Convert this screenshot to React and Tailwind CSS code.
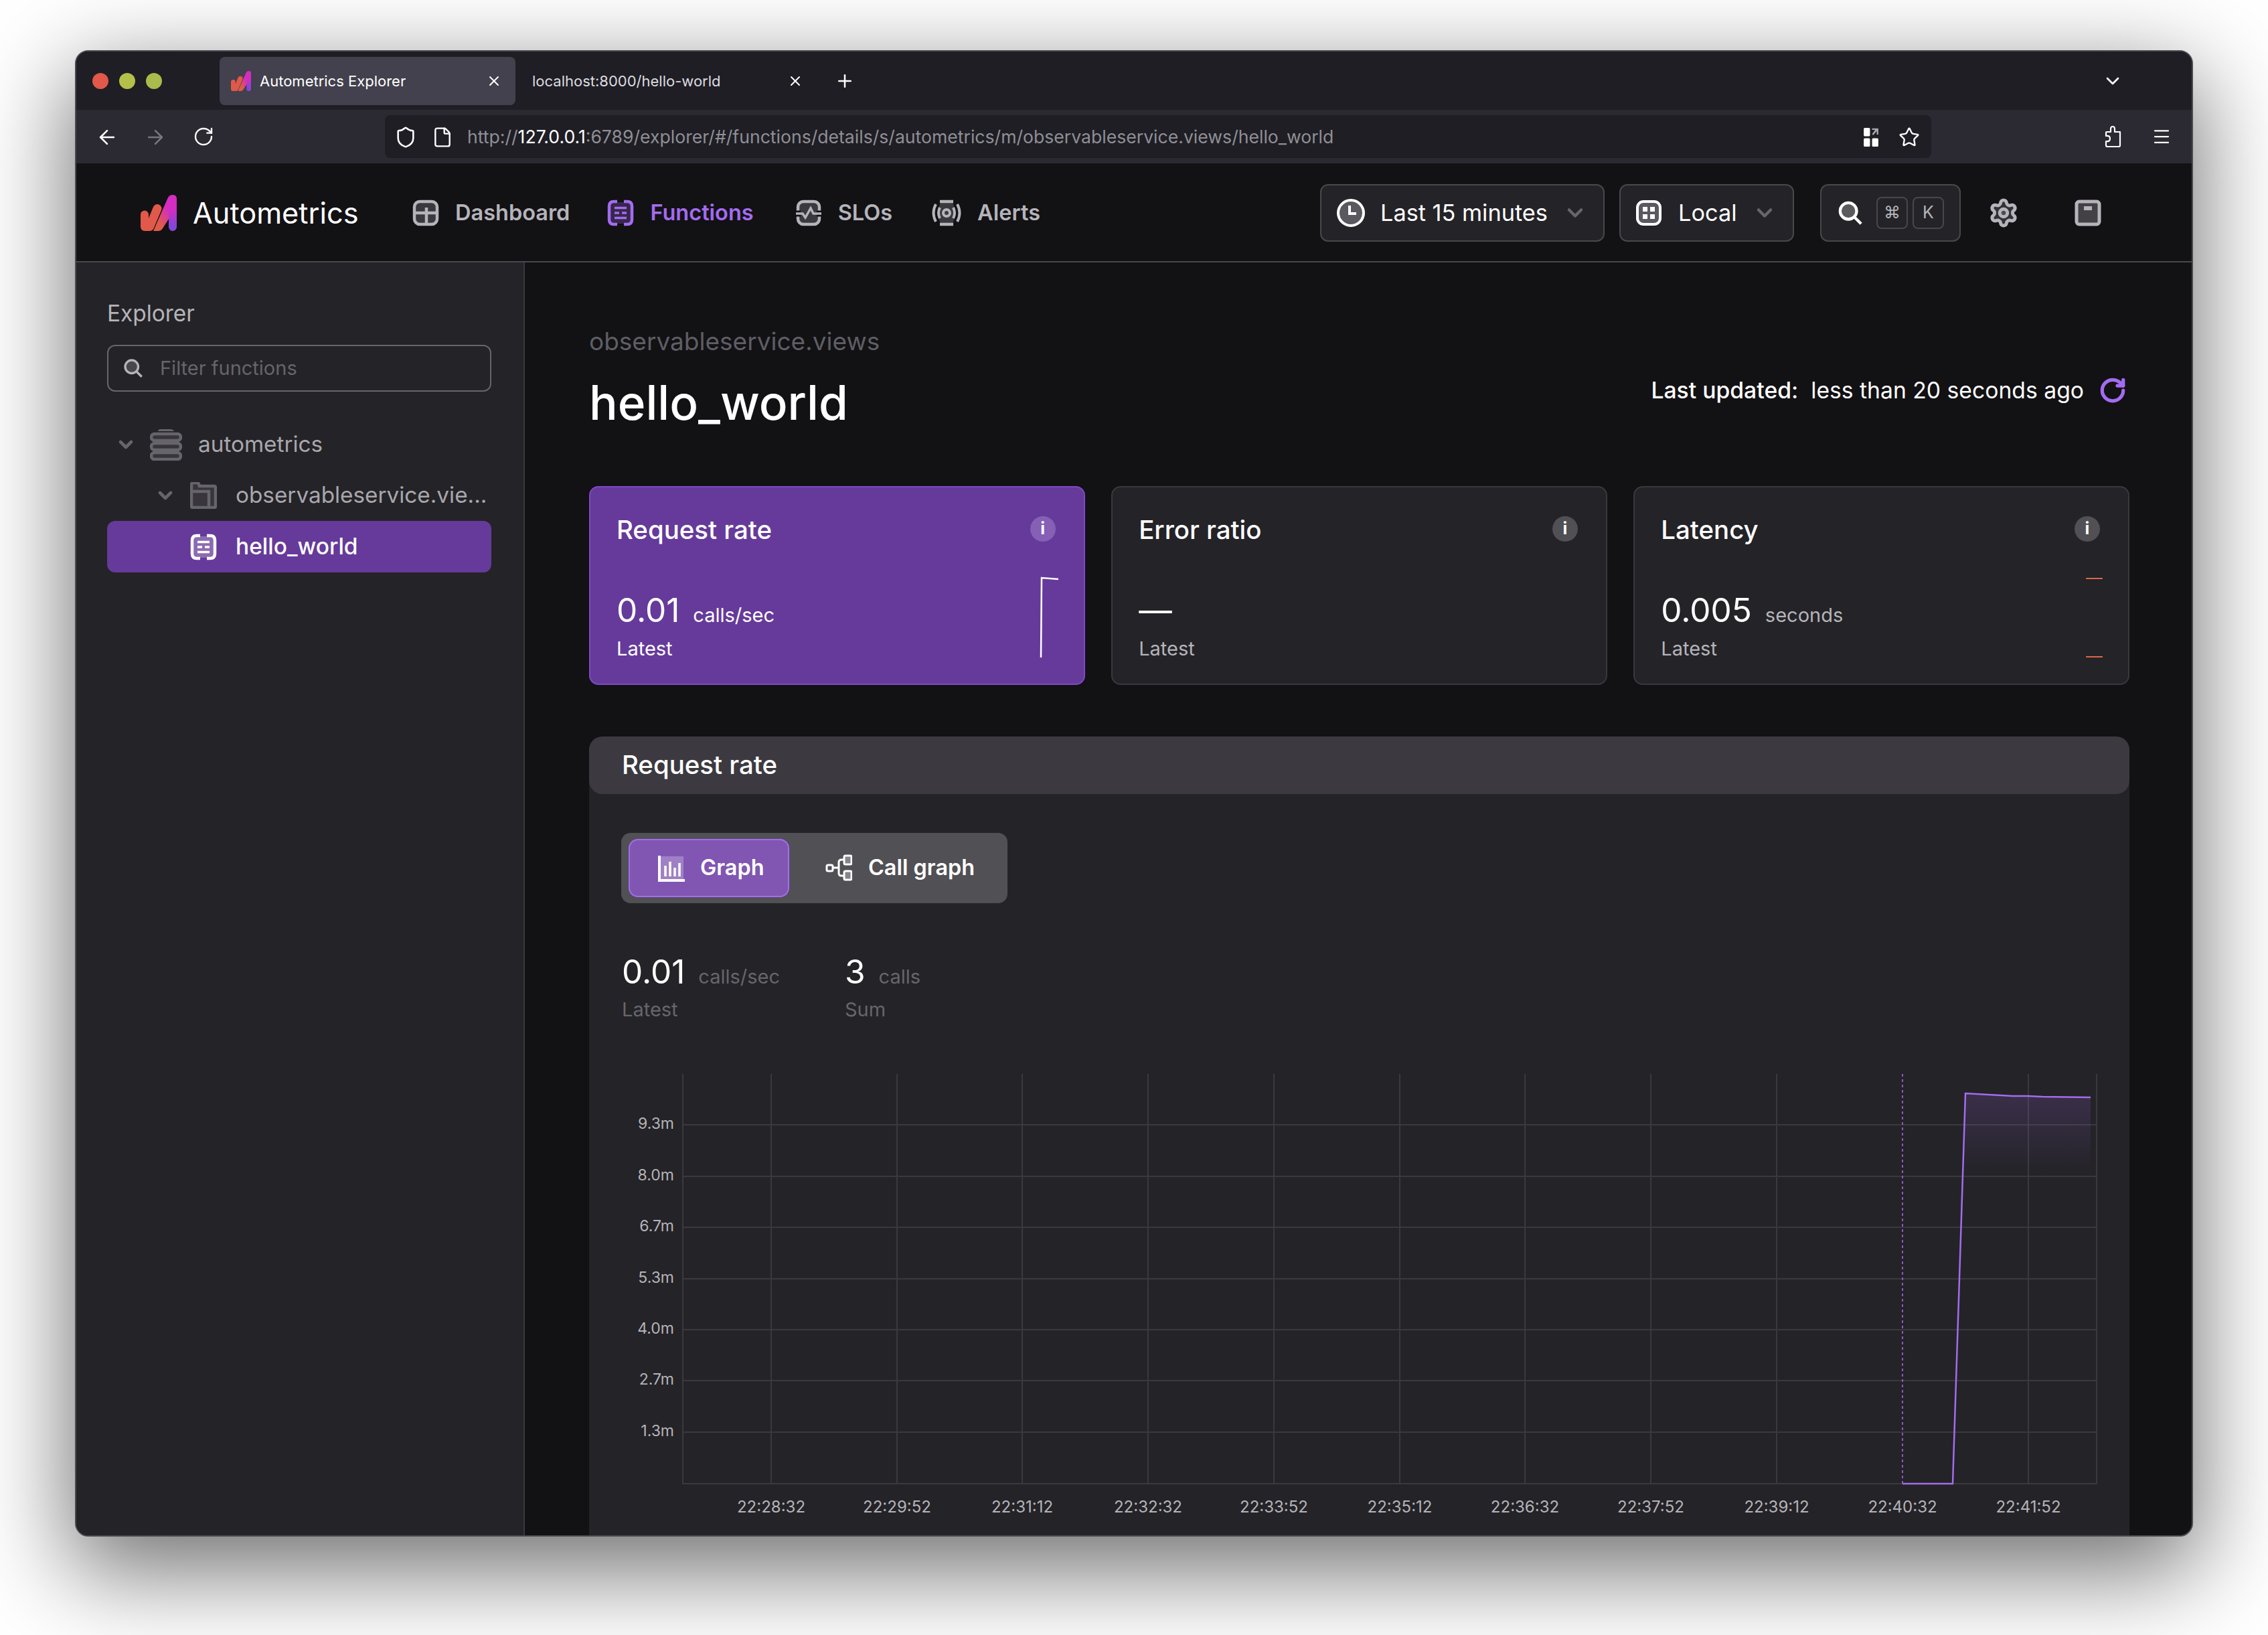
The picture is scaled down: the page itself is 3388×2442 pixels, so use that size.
import { ArrowLeft, ArrowRight, ChevronDown, File, Menu, Plus, RotateCw, Settings, Shield, Star, X } from "lucide-react"

const xLabels = ["22:28:32", "22:29:52", "22:31:12", "22:32:32", "22:33:52", "22:35:12", "22:36:32", "22:37:52", "22:39:12", "22:40:32", "22:41:52"]
const xLines = [1152, 1340, 1527, 1715, 1903, 2091, 2278, 2466, 2654, 2842, 3030]
const yLabels = [
  ["9.3m", 1680],
  ["8.0m", 1757],
  ["6.7m", 1833],
  ["5.3m", 1910],
  ["4.0m", 1986],
  ["2.7m", 2062],
  ["1.3m", 2139],
]

function Logo({ className }) {
  return (
    <svg viewBox="0 0 54 54" className={className}>
      <defs>
        <linearGradient id="logoBand" x1="0.1" y1="1" x2="0.75" y2="0.15">
          <stop offset="0.25" stopColor="#e0594a" />
          <stop offset="0.75" stopColor="#d52cc1" />
        </linearGradient>
        <linearGradient id="logoStem" x1="0" y1="0" x2="0" y2="1">
          <stop offset="0.35" stopColor="#d52cc1" />
          <stop offset="0.85" stopColor="#8346d8" />
        </linearGradient>
      </defs>
      <path d="M0 30a6 6 0 0 1 12-1v6l7-17a6.500 6.500 0 0 1 12 5L20 49a7 7 0 0 1-6 5H6a6 6 0 0 1-6-6Z" fill="#e0594a" />
      <path d="M19 54 41 4q2-4 7-4 6 0 6 6v8L42 36l-9 14q-2 4-7 4Z" fill="url(#logoBand)" />
      <path d="M42 22 54 4v44a6 6 0 0 1-12 0Z" fill="url(#logoStem)" />
    </svg>
  )
}

function DashboardIcon() {
  return (
    <svg viewBox="0 0 40 40" className="w-[40px] h-[40px] shrink-0" fill="none" stroke="currentColor" strokeWidth="4.500">
      <rect x="3" y="3" width="34" height="34" rx="8" fill="currentColor" fillOpacity="0.25" />
      <path d="M3 20H37M21 12V37" />
    </svg>
  )
}

function FunctionIcon({ className = "w-[40px] h-[40px]" }) {
  return (
    <svg viewBox="0 0 40 40" className={`${className} shrink-0`} fill="none" stroke="currentColor" strokeWidth="4.500">
      <rect x="4" y="4" width="32" height="32" rx="7" fill="currentColor" fillOpacity="0.25" stroke="none" />
      <path d="M15 3H10Q3 3 3 10V30Q3 37 10 37H15M25 3H30Q37 3 37 10V30Q37 37 30 37H25" />
      <path d="M11 12.500H29M11 20H18M22 20H29M11 27.500H29" strokeWidth="3.500" />
    </svg>
  )
}

function SloIcon() {
  return (
    <svg viewBox="0 0 40 40" className="w-[40px] h-[40px] shrink-0" fill="none" stroke="currentColor" strokeWidth="4.500">
      <rect x="4" y="3" width="32" height="34" rx="8" fill="currentColor" fillOpacity="0.25" />
      <path d="M0 21H8M32 21H40" strokeWidth="9" stroke="#121114" />
      <path d="M1 21H11L15 27L23 13L27 21H39" strokeWidth="3.500" />
    </svg>
  )
}

function AlertIcon() {
  return (
    <svg viewBox="0 0 44 40" className="w-[44px] h-[40px] shrink-0" fill="none" stroke="currentColor" strokeWidth="4.500">
      <rect x="11" y="3" width="22" height="34" rx="7" fill="currentColor" fillOpacity="0.25" stroke="none" />
      <path d="M12 3H32M12 37H32" />
      <circle cx="22" cy="20" r="5" strokeWidth="4" />
      <path d="M6 7Q-1 20 6 33M38 7Q45 20 38 33M12 12Q8 20 12 28M32 12Q36 20 32 28" strokeWidth="4" />
    </svg>
  )
}

function ClockIcon() {
  return (
    <svg viewBox="0 0 44 44" className="w-[44px] h-[44px] shrink-0" fill="none" stroke="currentColor" strokeWidth="4">
      <circle cx="22" cy="22" r="19" fill="#5a595f" />
      <path d="M20 11V23H30" />
    </svg>
  )
}

function LocalIcon() {
  return (
    <svg viewBox="0 0 40 40" className="w-[40px] h-[40px] shrink-0" fill="none" stroke="currentColor" strokeWidth="4">
      <rect x="3" y="3" width="34" height="34" rx="9" fill="#5a595f" />
      <rect x="11" y="11" width="7" height="7" fill="currentColor" stroke="none" />
      <rect x="22" y="11" width="7" height="7" fill="currentColor" stroke="none" />
      <rect x="11" y="22" width="7" height="7" fill="currentColor" stroke="none" />
      <rect x="22" y="22" width="7" height="7" fill="currentColor" stroke="none" />
    </svg>
  )
}

function SearchIcon({ className }) {
  return (
    <svg viewBox="0 0 40 40" className={className} fill="none" stroke="currentColor" strokeWidth="4.500">
      <circle cx="17" cy="17" r="13" fill="currentColor" fillOpacity="0.25" />
      <path d="M27 27L37 37" />
    </svg>
  )
}

function PanelIcon() {
  return (
    <svg viewBox="0 0 40 40" className="w-[40px] h-[40px] shrink-0" fill="none" stroke="currentColor" strokeWidth="5">
      <rect x="3" y="3" width="34" height="34" rx="4" fill="currentColor" fillOpacity="0.3" />
      <rect x="14" y="10" width="12" height="6" fill="currentColor" stroke="none" />
    </svg>
  )
}

function ServiceIcon() {
  return (
    <svg viewBox="0 0 48 48" className="w-[48px] h-[48px] shrink-0 text-[#66656b]" fill="none" stroke="currentColor" strokeWidth="4.500">
      <path d="M12 4Q12 1 16 1H30Q35 1 36 4Z" fill="currentColor" stroke="none" />
      <rect x="2" y="8" width="44" height="10" rx="5" fill="currentColor" fillOpacity="0.3" />
      <rect x="2" y="22" width="44" height="10" rx="5" fill="currentColor" fillOpacity="0.3" />
      <rect x="2" y="36" width="44" height="10" rx="5" fill="currentColor" fillOpacity="0.3" />
      <path d="M14 18V22M34 18V22M14 32V36M34 32V36" />
    </svg>
  )
}

function FolderIcon() {
  return (
    <svg viewBox="0 0 40 40" className="w-[40px] h-[40px] shrink-0 text-[#66656b]" fill="none" stroke="currentColor" strokeWidth="4.500">
      <path d="M2 4Q2 1 6 1H10Q13 1 14 6H36Q38 6 38 9V36Q38 38 36 38H4Q2 38 2 36Z" fill="currentColor" fillOpacity="0.3" />
      <path d="M2 14H28V38" />
    </svg>
  )
}

function GraphIcon() {
  return (
    <svg viewBox="0 0 40 40" className="w-[40px] h-[40px] shrink-0" fill="none" stroke="currentColor" strokeWidth="4">
      <rect x="4" y="2" width="34" height="34" fill="currentColor" fillOpacity="0.25" stroke="none" />
      <path d="M2 1V38H40" />
      <path d="M11 16V32M18 10V32M25 19V32M32 12V32" strokeWidth="3.500" />
    </svg>
  )
}

function CallGraphIcon() {
  return (
    <svg viewBox="0 0 40 40" className="w-[40px] h-[40px] shrink-0" fill="none" stroke="currentColor" strokeWidth="3">
      <rect x="2" y="16" width="9" height="9" rx="2" />
      <rect x="28" y="2" width="11" height="13" rx="2" fill="currentColor" fillOpacity="0.3" />
      <rect x="28" y="25" width="11" height="13" rx="2" fill="currentColor" fillOpacity="0.3" />
      <path d="M11 20H20M28 8H24Q20 8 20 12V28Q20 32 24 32H28" />
    </svg>
  )
}

function QrIcon() {
  return (
    <svg viewBox="0 0 28 36" className="w-[28px] h-[28px]" fill="white">
      <rect x="0" y="0" width="12" height="16" rx="2" />
      <rect x="0" y="20" width="12" height="16" rx="2" />
      <rect x="16" y="20" width="12" height="16" rx="2" />
      <path d="M16 1H28V13H25V6L18 14L16 12L22 4H16Z" fill="#a8a7ad" />
    </svg>
  )
}

function PuzzleIcon() {
  return (
    <svg viewBox="0 0 28 34" className="w-[28px] h-[34px]" fill="none" stroke="white" strokeWidth="2.200" strokeLinejoin="round">
      <path d="M4 10H10V6Q10 2 13 2Q16 2 16 6V10H24V30Q24 32 22 32H5Q3 32 3 30V24Q9 25 9 20Q9 15 3 16V11Q3 10 4 10Z" />
    </svg>
  )
}

function NavItem({ icon, label, active, className = "" }) {
  return (
    <div className={`flex items-center gap-[24px] text-[32.500px] font-semibold ${active ? "text-[#a36cf0]" : "text-[#b5b4ba]"} ${className}`}>
      {icon}
      <span>{label}</span>
    </div>
  )
}

function InfoDot({ className }) {
  return (
    <span className={`flex items-center justify-center w-[38px] h-[38px] rounded-full text-[25px] font-bold text-white ${className}`}>i</span>
  )
}

function MetricCard({ title, value, unit, active, children }) {
  return (
    <div className={`relative h-[297px] rounded-[14px] border-2 px-[39px] pt-[41px] ${active ? "bg-[#663a9a] border-[#7e49c4]" : "bg-[#242327] border-[#39383d]"}`}>
      <div className="flex items-center justify-between h-[46px]">
        <span className="text-[38.400px] font-medium text-white">{title}</span>
        <InfoDot className={`mr-[3px] -mt-[4px] ${active ? "bg-[#8560b5]" : "bg-[#515055]"}`} />
      </div>
      <div className="flex items-baseline gap-[20px] h-[60px] mt-[66px]">
        <span className="text-[49.500px] leading-[60px] text-white">{value}</span>
        <span className={`text-[29px] ${active ? "text-white" : "text-[#b5b4ba]"}`}>{unit}</span>
      </div>
      <div className={`mt-[9px] h-[38px] text-[29px] leading-[38px] ${active ? "text-white" : "text-[#b5b4ba]"}`}>Latest</div>
      {children}
    </div>
  )
}

function Stat({ value, unit, label, className = "" }) {
  return (
    <div className={className}>
      <div className="flex items-baseline gap-[20px] h-[60px]">
        <span className="text-[49.500px] leading-[60px] text-white">{value}</span>
        <span className="text-[29px] text-[#67666b]">{unit}</span>
      </div>
      <div className="mt-[8px] h-[38px] text-[29px] leading-[38px] text-[#67666b]">{label}</div>
    </div>
  )
}

function Chart() {
  return (
    <svg viewBox="880 1590 2299 702" className="block w-[2299px] h-[702px] mt-[63px] shrink-0">
      <defs>
        <linearGradient id="chartArea" x1="0" y1="0" x2="0" y2="1">
          <stop offset="0" stopColor="#a36cf0" stopOpacity="0.17" />
          <stop offset="1" stopColor="#a36cf0" stopOpacity="0" />
        </linearGradient>
      </defs>
      {yLabels.map(([label, y]) => (
        <g key={label}>
          <line x1="1020" x2="3132" y1={y} y2={y} stroke="#3a393e" strokeWidth="2" />
          <text x="1007" y={y + 6} textAnchor="end" fontSize="23" fill="#b5b4ba">{label}</text>
        </g>
      ))}
      <path d="M1020 1604V2216H3132V1604" fill="none" stroke="#3a393e" strokeWidth="2" />
      {xLines.map((x, i) => (
        <g key={x}>
          {i !== 9 && <line x1={x} x2={x} y1="1604" y2="2216" stroke="#3a393e" strokeWidth="2" />}
          <text x={x} y="2259" textAnchor="middle" fontSize="24" fill="#b5b4ba">{xLabels[i]}</text>
        </g>
      ))}
      <line x1="2842" x2="2842" y1="1604" y2="2216" stroke="#8a58c8" strokeWidth="2" strokeDasharray="4 4" />
      <path d="M2936 1633L3007 1637L3029 1637L3051 1638L3123 1639V1757H2931Z" fill="url(#chartArea)" />
      <path d="M2842 2216H2917L2936 1633L3007 1637L3029 1637L3051 1638L3123 1639" fill="none" stroke="#a36cf0" strokeWidth="2.500" />
    </svg>
  )
}

export default function App() {
  return (
    <div className="h-[2442px] bg-white pt-[75px] pl-[112px] overflow-hidden font-[Inter,sans-serif]">
      <div className="flex flex-col w-[3164px] h-[2220px] rounded-[20px] border-2 border-[#4a4950] overflow-hidden bg-[#121114] shadow-[0_44px_140px_8px_rgba(0,0,0,0.56)]">

        {/* browser tabs */}
        <div className="flex items-center h-[87px] shrink-0 bg-[#1f1e24] text-white">
          <div className="flex gap-[16px] ml-[24px]">
            <span className="w-[24px] h-[24px] rounded-full bg-[#e2584a]" />
            <span className="w-[24px] h-[24px] rounded-full bg-[#b5c04a]" />
            <span className="w-[24px] h-[24px] rounded-full bg-[#a9bb4c]" />
          </div>
          <div className="flex items-center w-[442px] h-[72px] ml-[86px] pl-[17px] pr-[20px] gap-[13px] rounded-[8px] bg-[#42414d]">
            <Logo className="w-[30px] h-[30px]" />
            <span className="mt-[2px] text-[22px]">Autometrics Explorer</span>
            <X size={24} strokeWidth={2} className="ml-auto" />
          </div>
          <div className="flex items-center w-[440px] h-[72px] pl-[25px] pr-[10px] text-[#dcdce0]">
            <span className="mt-[2px] text-[22px]">localhost:8000/hello-world</span>
            <X size={24} strokeWidth={2} className="ml-auto text-white" />
          </div>
          <Plus size={30} strokeWidth={2} className="ml-[37px]" />
          <ChevronDown size={32} strokeWidth={2} className="ml-auto mr-[102px]" />
        </div>

        {/* browser toolbar */}
        <div className="flex items-center h-[80px] shrink-0 bg-[#2b2a33] text-white">
          <div className="flex ml-[10px] pt-[2px]">
            <span className="flex justify-center w-[72px]"><ArrowLeft size={34} strokeWidth={1.800} /></span>
            <span className="flex justify-center w-[72px]"><ArrowRight size={34} strokeWidth={1.800} className="text-[#77767e]" /></span>
            <span className="flex justify-center w-[72px]"><RotateCw size={32} strokeWidth={1.800} /></span>
          </div>
          <div className="flex items-center w-[2310px] h-[64px] ml-[235px] pt-[2px] rounded-[8px] bg-[#1f1e24]">
            <Shield size={34} strokeWidth={1.800} className="ml-[14px]" />
            <File size={32} strokeWidth={1.800} className="ml-[22px]" />
            <span className="ml-[21px] text-[26.600px] text-[#8f8f96]">
              http://<span className="text-white">127.0.0.1</span>:6789/explorer/#/functions/details/s/autometrics/m/observableservice.views/hello_world
            </span>
            <span className="ml-auto mr-[17px] flex items-center gap-[27px]">
              <QrIcon />
              <Star size={32} strokeWidth={1.800} />
            </span>
          </div>
          <span className="flex justify-center w-[72px] ml-[236px]"><PuzzleIcon /></span>
          <span className="flex justify-center w-[72px]"><Menu size={30} strokeWidth={1.800} /></span>
        </div>

        {/* app header */}
        <div className="flex items-center h-[148px] shrink-0 pl-[96px] pr-[135px] pt-[2px] border-b-2 border-[#48474c] bg-[#121114]">
          <Logo className="w-[54px] h-[54px]" />
          <span className="w-[246px] ml-[24px] text-[43.300px] text-white whitespace-nowrap">Autometrics</span>
          <NavItem className="ml-[82px]" icon={<DashboardIcon />} label="Dashboard" />
          <NavItem className="ml-[56px]" icon={<FunctionIcon />} label="Functions" active />
          <NavItem className="ml-[62px]" icon={<SloIcon />} label="SLOs" />
          <NavItem className="ml-[59px] gap-[22px]" icon={<AlertIcon />} label="Alerts" />

          <div className="ml-auto flex items-center">
            <div className="flex items-center w-[425px] h-[86px] pl-[22px] rounded-[12px] border-2 border-[#48474c] bg-[#242327] text-white">
              <ClockIcon />
              <span className="ml-[22px] text-[34.300px]">Last 15 minutes</span>
              <ChevronDown size={36} strokeWidth={3} className="ml-auto mr-[24px] text-[#66656b]" />
            </div>
            <div className="flex items-center w-[261px] h-[86px] ml-[22px] pl-[22px] rounded-[12px] border-2 border-[#48474c] bg-[#242327] text-white">
              <LocalIcon />
              <span className="ml-[24px] text-[34.300px]">Local</span>
              <ChevronDown size={36} strokeWidth={3} className="ml-auto mr-[24px] text-[#66656b]" />
            </div>
            <div className="flex items-center w-[210px] h-[86px] ml-[39px] pl-[24px] rounded-[12px] border-2 border-[#48474c] bg-[#242327] text-white">
              <SearchIcon className="w-[38px] h-[38px] shrink-0" />
              <span className="flex items-center justify-center w-[47px] h-[48px] ml-[20px] rounded-[8px] border-2 border-[#48474c] text-[25px] text-[#b5b4ba]">⌘</span>
              <span className="flex items-center justify-center w-[47px] h-[48px] ml-[7px] rounded-[8px] border-2 border-[#48474c] text-[25px] text-[#b5b4ba]">K</span>
            </div>
            <Settings size={46} strokeWidth={2.600} fill="#b5b4ba" fillOpacity={0.2} className="ml-[41px] text-[#b5b4ba]" />
            <span className="ml-[83px] text-[#b5b4ba]"><PanelIcon /></span>
          </div>
        </div>

        <div className="flex flex-1 min-h-0">
          {/* sidebar */}
          <aside className="w-[670px] shrink-0 pl-[46px] pr-[48px] pt-[54px] bg-[#242327] border-r-2 border-[#39383d]">
            <div className="h-[44px] text-[33.400px] leading-[44px] text-[#b5b4ba]">Explorer</div>
            <div className="flex items-center h-[70px] mt-[25px] pl-[22px] rounded-[12px] border-2 border-[#66656b]">
              <SearchIcon className="w-[30px] h-[30px] shrink-0 text-[#b5b4ba]" />
              <input placeholder="Filter functions" className="ml-[25px] flex-1 min-w-0 bg-transparent text-[29px] outline-none placeholder:text-[#66656b]" />
            </div>
            <div className="flex items-center h-[77px] mt-[40px] pl-[12px] text-[#a8a7ad]">
              <ChevronDown size={32} strokeWidth={3.500} className="text-[#66656b]" />
              <span className="ml-[20px]"><ServiceIcon /></span>
              <span className="ml-[24px] text-[33.300px]">autometrics</span>
            </div>
            <div className="flex items-center h-[76px] pl-[71px] text-[#a8a7ad]">
              <ChevronDown size={32} strokeWidth={3.500} className="text-[#66656b]" />
              <span className="ml-[21px]"><FolderIcon /></span>
              <span className="ml-[28px] w-[374px] text-[33.300px] whitespace-nowrap">observableservice.vie...</span>
            </div>
            <div className="flex items-center h-[77px] pl-[124px] rounded-[12px] bg-[#663a9a] text-white">
              <FunctionIcon />
              <span className="ml-[28px] text-[33.500px] font-medium">hello_world</span>
            </div>
          </aside>

          {/* main */}
          <main className="flex flex-1 flex-col min-w-0 pl-[96px] pr-[93px] pt-[95px] overflow-hidden">
            <div className="flex items-start justify-between shrink-0">
              <div>
                <div className="h-[46px] text-[37px] leading-[46px] text-[#5f5e64]">observableservice.views</div>
                <h1 className="h-[86px] mt-[25px] text-[71px] leading-[86px] font-medium text-white">hello_world</h1>
              </div>
              <div className="flex items-center h-[40px] mt-[76px] mr-[4px] text-[33.700px] text-white">
                <span className="font-medium">Last updated:</span>
                <span className="ml-[19px]">less than 20 seconds ago</span>
                <RotateCw size={42} strokeWidth={3} className="ml-[22px] text-[#a36cf0]" />
              </div>
            </div>

            <div className="grid grid-cols-3 gap-[39.500px] mt-[82px] shrink-0">
              <MetricCard title="Request rate" value="0.01" unit="calls/sec" active>
                <svg viewBox="0 0 740 297" className="absolute -inset-[2px] w-[740px] h-[297px]">
                  <path d="M675 256L676 137L701 139" fill="none" stroke="#ffffff" strokeWidth="2.500" />
                </svg>
              </MetricCard>
              <MetricCard title="Error ratio" value="—" unit="" />
              <MetricCard title="Latency" value="0.005" unit="seconds">
                <svg viewBox="0 0 740 297" className="absolute -inset-[2px] w-[740px] h-[297px]">
                  <path d="M676 138H701M676 255H701" fill="none" stroke="#d9674a" strokeWidth="2" />
                </svg>
              </MetricCard>
            </div>

            <section className="flex flex-1 flex-col min-h-0 mt-[77px] rounded-t-[20px] bg-[#242327]">
              <div className="flex items-center h-[86px] shrink-0 pl-[49px] rounded-[20px] bg-[#3c3a40] text-[38.400px] font-medium text-white">Request rate</div>
              <div className="flex items-center w-[577px] h-[105px] shrink-0 mt-[58px] ml-[48px] pl-[11px] rounded-[14px] bg-[#515055] text-[32.400px] font-semibold text-white">
                <div className="flex items-center w-[240px] h-[87px] pl-[42px] gap-[23px] rounded-[14px] border-2 border-[#a36cf0] bg-[#8156b2]">
                  <GraphIcon />
                  <span>Graph</span>
                </div>
                <div className="flex items-center ml-[54px] gap-[24px]">
                  <CallGraphIcon />
                  <span>Call graph</span>
                </div>
              </div>
              <div className="flex mt-[72px] ml-[49px] shrink-0">
                <Stat className="w-[333px]" value="0.01" unit="calls/sec" label="Latest" />
                <Stat value="3" unit="calls" label="Sum" />
              </div>
              <Chart />
            </section>
          </main>
        </div>
      </div>
    </div>
  )
}
